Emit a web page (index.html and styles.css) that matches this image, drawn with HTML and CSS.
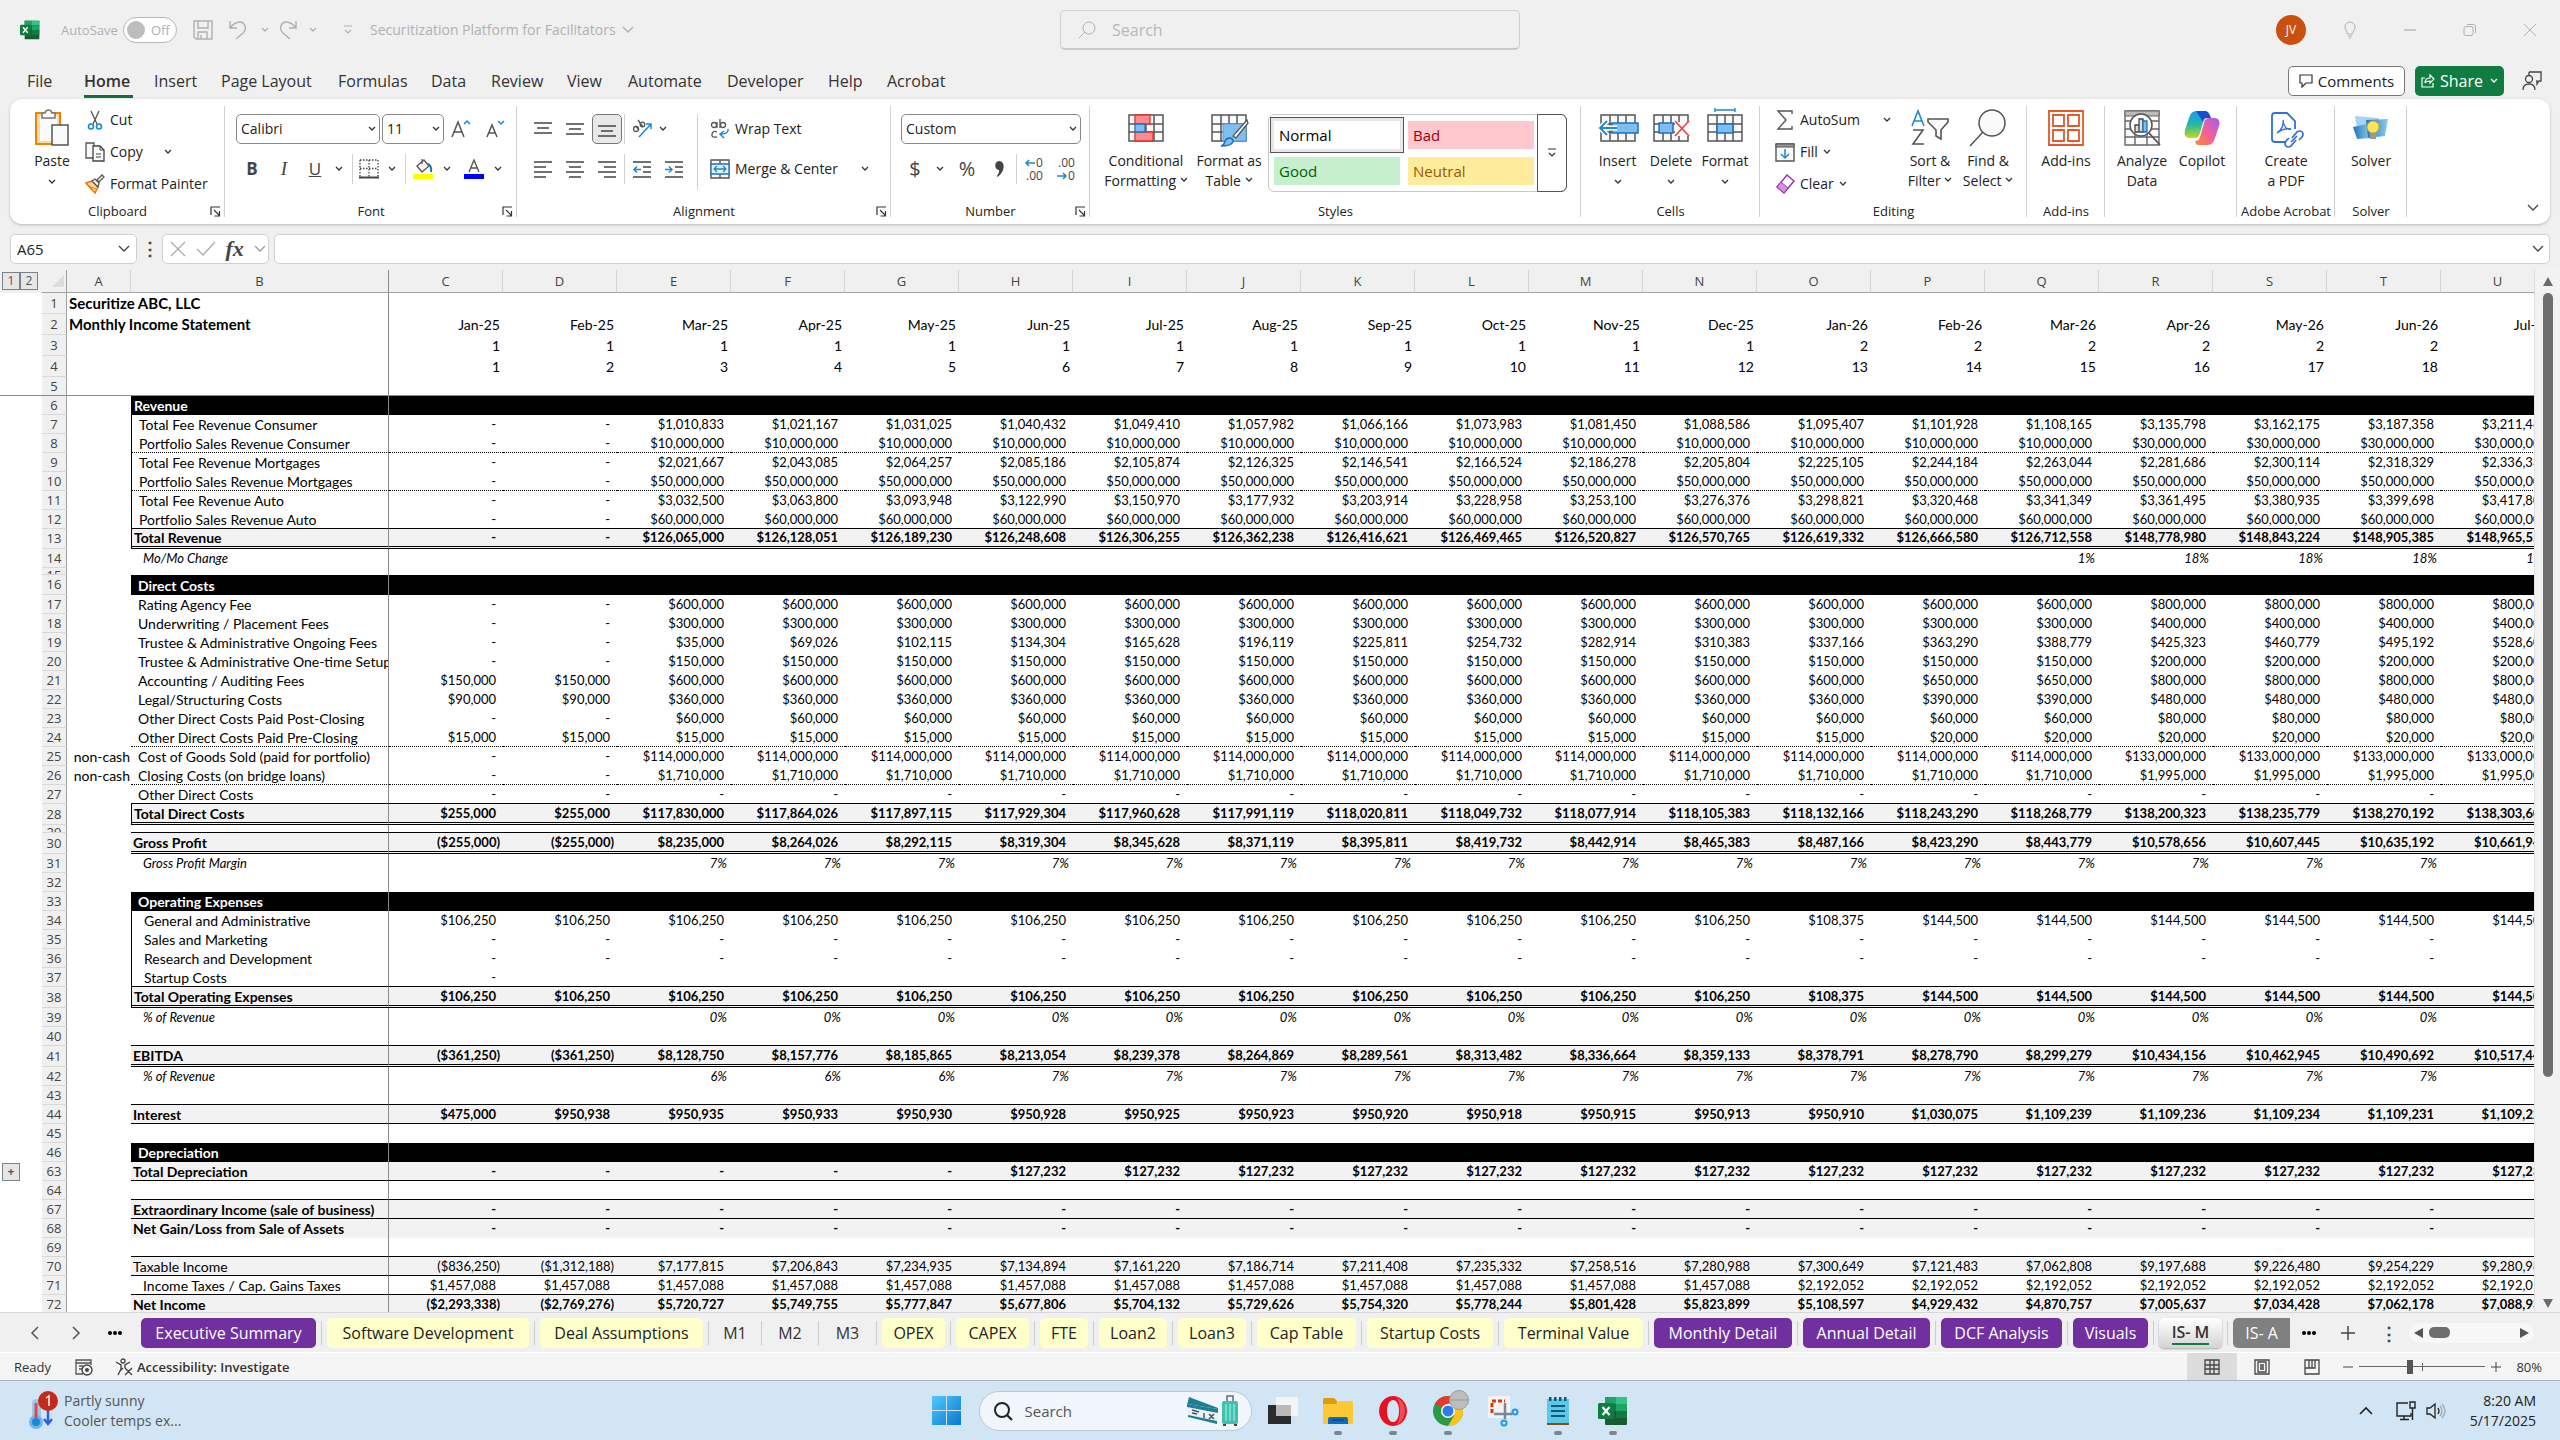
FILE: index.html
```html
<!DOCTYPE html>
<html lang="en">
<head>
<meta charset="utf-8">
<title>Securitization Platform for Facilitators</title>
<link rel="stylesheet" href="styles.css">
</head>
<body>
<svg class="defs" aria-hidden="true">
  <symbol id="chev" viewBox="0 0 8 6"><path d="M1 1l3 3 3-3" fill="none" stroke="currentColor" stroke-width="1.3"/></symbol>
  <symbol id="chev-l" viewBox="0 0 12 8"><path d="M1 1l5 5 5-5" fill="none" stroke="currentColor" stroke-width="1.3"/></symbol>
  <symbol id="launch" viewBox="0 0 11 11"><path d="M1 9V1h9M4 4l5 5M9.500 5v5H4.500" fill="none" stroke="#333" stroke-width="1.200"/></symbol>
  <symbol id="excel" viewBox="0 0 30 30"><path d="M8 1h20q1 0 1 1v26q0 1-1 1H8q-1 0-1-1V2q0-1 1-1z" fill="#185c37"/><path d="M7 1h11v7H7z" fill="#21a366"/><path d="M18 1h10q1 0 1 1v6H18z" fill="#33c481"/><path d="M18 8h11v7H18z" fill="#21a366"/><path d="M7 8h11v7H7zM18 15h11v7H18z" fill="#107c41"/><rect y="7" width="16" height="16" rx="1.500" fill="#107c41"/><path d="M4.500 11l7 8M11.500 11l-7 8" stroke="#fff" stroke-width="2.200"/></symbol>
  <symbol id="grid" viewBox="0 0 36 28"><path d="M1 1h34v26H1zM1 10h34M1 18h34M10 1v26M18 1v26M26 1v26" fill="#fafafa" stroke="#555" stroke-width="1.500"/></symbol>
</svg>

<header class="titlebar">
  <div class="quick">
    <svg class="s20" viewBox="0 0 30 30"><use href="#excel"/></svg>
    <span class="autosave">AutoSave</span>
    <button class="toggle" aria-label="AutoSave off"><i></i>Off</button>
    <button aria-label="Save"><svg class="s20" viewBox="0 0 20 20"><path d="M1 1h18v18H3l-2-2zM5 1v7h10V1M5 19v-7h9v7M8 19v-4" fill="none" stroke="currentColor" stroke-width="1.400"/></svg></button>
    <button aria-label="Undo"><svg class="s20" viewBox="0 0 20 20"><path d="M1 1v7h7M1 8C6 1 13 1 15 4s2 6-1 9l-7 6" fill="none" stroke="currentColor" stroke-width="1.400"/></svg></button>
    <svg class="chev"><use href="#chev"/></svg>
    <button aria-label="Redo"><svg class="s20" viewBox="0 0 20 20"><path d="M19 1v7h-7M19 8C14 1 7 1 5 4s-2 6 1 9l7 6" fill="none" stroke="currentColor" stroke-width="1.400"/></svg></button>
    <svg class="chev"><use href="#chev"/></svg>
    <svg class="s10" viewBox="0 0 10 10"><path d="M1 1h8M2 5l3 3 3-3" fill="none" stroke="currentColor" stroke-width="1.200"/></svg>
    <button class="doc">Securitization Platform for Facilitators <svg class="chev-l"><use href="#chev-l"/></svg></button>
  </div>
  <label class="search"><svg class="s18" viewBox="0 0 18 18"><circle cx="11" cy="7" r="6" fill="none" stroke="currentColor"/><path d="M7 11l-6 6" stroke="currentColor"/></svg><input type="text" placeholder="Search" aria-label="Search"></label>
  <div class="window">
    <button class="avatar">JV</button>
    <button aria-label="Tips"><svg class="s18" viewBox="0 0 18 18"><path d="M6.500 13C6 10 4 9 4 6a5 5 0 0 1 10 0c0 3-2 4-2.500 7zM7 15h4M8 17h2" fill="none" stroke="currentColor"/></svg></button>
    <button aria-label="Minimize"><svg class="s14" viewBox="0 0 14 14"><path d="M1 7h12" stroke="currentColor" stroke-width="1.300"/></svg></button>
    <button aria-label="Restore"><svg class="s14" viewBox="0 0 14 14"><rect x="1" y="3.500" width="9" height="9" rx="2" fill="none" stroke="currentColor"/><path d="M4 1.500h6q2.500 0 2.500 2.500v6" fill="none" stroke="currentColor"/></svg></button>
    <button aria-label="Close"><svg class="s14" viewBox="0 0 14 14"><path d="M1 1l12 12M13 1L1 13" stroke="currentColor"/></svg></button>
  </div>
</header>

<nav class="menu">
  <div class="menu-tabs">
    <button>File</button><button class="active">Home</button><button>Insert</button><button>Page Layout</button><button>Formulas</button><button>Data</button><button>Review</button><button>View</button><button>Automate</button><button>Developer</button><button>Help</button><button>Acrobat</button>
  </div>
  <button class="comments"><svg class="s14" viewBox="0 0 14 14"><path d="M1 1h12v8H7l-4 4V9H1z" fill="none" stroke="#333" stroke-width="1.200"/></svg>Comments</button>
  <button class="share"><svg class="s14" viewBox="0 0 14 14"><path d="M4 4H1v9h11V9M4 9c0-3 2-5 5-5V1l4 4-4 4V7C7 7 5 7 4 9z" fill="none" stroke="#fff" stroke-width="1.200"/></svg>Share<svg class="chev"><use href="#chev"/></svg></button>
  <button class="person" aria-label="Feedback"><svg class="s20" viewBox="0 0 20 20"><path d="M7 1h12v9h-2l-2 3v-3h-1M7 1v3" fill="none" stroke="#444" stroke-width="1.300"/><circle cx="7" cy="8" r="3.500" fill="none" stroke="#444" stroke-width="1.300"/><path d="M1 19q0-6 6-6t6 6" fill="none" stroke="#444" stroke-width="1.300"/></svg></button>
</nav>

<section class="ribbon">
  <div class="group g-clip">
    <div class="body clip">
      <button class="big"><svg class="s38" viewBox="0 0 38 38"><path d="M3 4h24v31H3z" fill="#fbdc9a" stroke="#e8850c" stroke-width="2"/><path d="M7 7h17v25H7z" fill="#fafafa"/><path d="M9 9V4h3c1-4 6-4 7 0h3v5z" fill="#fafafa" stroke="#777" stroke-width="1.500"/><path d="M19 16h16v20H19z" fill="#fafafa" stroke="#555" stroke-width="1.500"/></svg><span>Paste</span><svg class="chev"><use href="#chev"/></svg></button>
      <div class="stack">
        <button><svg class="s20" viewBox="0 0 20 20"><path d="M6 1l6 13M14 1L8 14" stroke="#555" stroke-width="1.300"/><circle cx="6" cy="16.500" r="2.500" fill="none" stroke="#1e88d0" stroke-width="1.600"/><circle cx="14" cy="16.500" r="2.500" fill="none" stroke="#1e88d0" stroke-width="1.600"/></svg>Cut</button>
        <button><svg class="s20" viewBox="0 0 20 20"><path d="M8 16H1V1h8v3" fill="#fafafa" stroke="#555" stroke-width="1.300"/><path d="M8 4h7l4 4v11H8z" fill="#fafafa" stroke="#444" stroke-width="1.300"/><path d="M15 4v4h4M11 12h5M11 15h5" fill="none" stroke="#444"/></svg>Copy<svg class="chev far"><use href="#chev"/></svg></button>
        <button><svg class="s20" viewBox="0 0 20 20"><path d="M1 9l6-2 6 6-3 6z" fill="#fbdc9a" stroke="#e8730c" stroke-width="1.500"/><path d="M7 7l3-2 4 4-1 4zM12 6l5-5 2 2-5 5z" fill="#fafafa" stroke="#555" stroke-width="1.300"/><path d="M3 12l8 3" stroke="#e8730c"/></svg>Format Painter</button>
      </div>
    </div>
    <footer>Clipboard<svg class="launch"><use href="#launch"/></svg></footer>
  </div>

  <div class="group g-font">
    <div class="body two">
      <div class="row font1">
        <button class="combo">Calibri<svg class="chev"><use href="#chev"/></svg></button>
        <button class="combo">11<svg class="chev"><use href="#chev"/></svg></button>
        <button aria-label="Grow font"><svg class="s20" viewBox="0 0 20 20"><path d="M1 18L7 3l6 15M3.500 13h7" fill="none" stroke="#555" stroke-width="1.500"/><path d="M13 5l3-3 3 3" fill="none" stroke="#1e88d0" stroke-width="1.500"/></svg></button>
        <button aria-label="Shrink font"><svg class="s20" viewBox="0 0 20 20"><path d="M2 18L7 6l5 12M4 14h6" fill="none" stroke="#555" stroke-width="1.500"/><path d="M13 2l3 3 3-3" fill="none" stroke="#1e88d0" stroke-width="1.500"/></svg></button>
      </div>
      <div class="row font2">
        <button class="b">B</button><button class="i">I</button><button class="u">U</button><svg class="chev"><use href="#chev"/></svg><hr>
        <button aria-label="Borders"><svg class="s20" viewBox="0 0 20 20"><path d="M1 1h18v17M1 1v17M10 1v17M1 9.500h18" fill="none" stroke="#444" stroke-width="1.300" stroke-dasharray="1.500 1.500"/><path d="M0 18.500h20" stroke="#444" stroke-width="2"/></svg></button><svg class="chev"><use href="#chev"/></svg><hr>
        <button aria-label="Fill color"><svg class="s20" viewBox="0 0 20 20"><path d="M4 7l7-6 5 6-7 6z" fill="#fafafa" stroke="#555" stroke-width="1.300"/><path d="M9 5V0" stroke="#555" stroke-width="1.300"/><path d="M15 5q4 2 3 8" fill="none" stroke="#1e70c0" stroke-width="2"/><path d="M0 15h20v5H0z" fill="#ff0"/></svg></button><svg class="chev"><use href="#chev"/></svg>
        <button aria-label="Font color"><svg class="s20" viewBox="0 0 20 20"><path d="M5 13L10 1l5 12M7 9h6" fill="none" stroke="#555" stroke-width="1.400"/><path d="M0 15h20v5H0z" fill="#00f"/></svg></button><svg class="chev"><use href="#chev"/></svg>
      </div>
    </div>
    <footer>Font<svg class="launch"><use href="#launch"/></svg></footer>
  </div>

  <div class="group g-align">
    <div class="body alignbody">
      <div class="two">
        <div class="row align1">
          <button aria-label="Top align"><svg class="s18" viewBox="0 0 18 18"><path d="M0 3h18M3 8h12M0 13h18" stroke="#444" stroke-width="1.400"/></svg></button>
          <button aria-label="Middle align"><svg class="s18" viewBox="0 0 18 18"><path d="M0 4h18M3 9h12M0 14h18" stroke="#444" stroke-width="1.400"/></svg></button>
          <button class="pressed" aria-label="Bottom align"><svg class="s18" viewBox="0 0 18 18"><path d="M0 6h18M3 11h12M0 16h18" stroke="#444" stroke-width="1.400"/></svg></button>
          <hr>
          <button aria-label="Orientation"><svg class="s20" viewBox="0 0 20 20"><path d="M7 18L19 5M14 5h5v5" fill="none" stroke="#1e88d0" stroke-width="1.500"/><circle cx="4" cy="10" r="2.500" fill="none" stroke="#555" stroke-width="1.300"/><path d="M4 7l3 4M6 1l5 7" stroke="#555" stroke-width="1.300"/><circle cx="10.500" cy="5.500" r="2.300" fill="none" stroke="#555" stroke-width="1.300"/></svg></button>
          <svg class="chev"><use href="#chev"/></svg>
        </div>
        <div class="row align1">
          <button aria-label="Align left"><svg class="s18" viewBox="0 0 18 18"><path d="M0 2h18M0 7h12M0 12h18M0 17h12" stroke="#444" stroke-width="1.400"/></svg></button>
          <button aria-label="Center"><svg class="s18" viewBox="0 0 18 18"><path d="M0 2h18M3 7h12M0 12h18M3 17h12" stroke="#444" stroke-width="1.400"/></svg></button>
          <button aria-label="Align right"><svg class="s18" viewBox="0 0 18 18"><path d="M0 2h18M6 7h12M0 12h18M6 17h12" stroke="#444" stroke-width="1.400"/></svg></button>
          <hr>
          <button aria-label="Decrease indent"><svg class="s18" viewBox="0 0 18 18"><path d="M0 2h18M10 7h8M10 12h8M0 17h18" stroke="#444" stroke-width="1.400"/><path d="M8 9.500H1M4 6.500l-3 3 3 3" fill="none" stroke="#1e88d0" stroke-width="1.500"/></svg></button>
          <button aria-label="Increase indent"><svg class="s18" viewBox="0 0 18 18"><path d="M0 2h18M10 7h8M10 12h8M0 17h18" stroke="#444" stroke-width="1.400"/><path d="M0 9.500h7M4 6.500l3 3-3 3" fill="none" stroke="#1e88d0" stroke-width="1.500"/></svg></button>
        </div>
      </div>
      <hr class="tall">
      <div class="two">
        <button class="wide"><svg class="s20" viewBox="0 0 20 20"><circle cx="4" cy="6" r="2.500" fill="none" stroke="#555" stroke-width="1.300"/><path d="M7 3v6M10 0v9" stroke="#555" stroke-width="1.300"/><circle cx="13" cy="6" r="2.500" fill="none" stroke="#555" stroke-width="1.300"/><path d="M7 13q-4-2-5 2t5 3" fill="none" stroke="#555" stroke-width="1.300"/><path d="M18 10q1 5-7 5M14 12l-4 3 4 4" fill="none" stroke="#1e88d0" stroke-width="1.500"/></svg>Wrap Text</button>
        <button class="wide merge"><svg class="s20" viewBox="0 0 20 20"><path d="M1 1h18v18H1zM10 1v18" fill="#fafafa" stroke="#555" stroke-width="1.400"/><path d="M1 5h18v10H1z" fill="#e3f1fb" stroke="#1e70c0" stroke-width="1.300"/><path d="M4 10h12M7 7l-3 3 3 3M13 7l3 3-3 3" fill="none" stroke="#1e88d0" stroke-width="1.300"/></svg>Merge &amp; Center<svg class="chev"><use href="#chev"/></svg></button>
      </div>
    </div>
    <footer>Alignment<svg class="launch"><use href="#launch"/></svg></footer>
  </div>

  <div class="group g-num">
    <div class="body two">
      <button class="combo">Custom<svg class="chev"><use href="#chev"/></svg></button>
      <div class="row num2">
        <button class="sym">$</button><svg class="chev"><use href="#chev"/></svg><button class="sym">%</button>
        <button aria-label="Comma style"><svg class="s18" viewBox="0 0 18 18"><path d="M9 1c7 0 6 12-2 16-1-1 3-4 2-7-5 0-5-9 0-9z" fill="#444"/></svg></button><hr>
        <button class="dec"><span><svg class="arr" viewBox="0 0 10 8"><path d="M10 4H1M4 1L1 4l3 3" fill="none" stroke="#1e88d0" stroke-width="1.500"/></svg>0</span><span>.00</span></button><button class="dec"><span>.00</span><span><svg class="arr" viewBox="0 0 10 8"><path d="M0 4h9M6 1l3 3-3 3" fill="none" stroke="#1e88d0" stroke-width="1.500"/></svg>0</span></button>
      </div>
    </div>
    <footer>Number<svg class="launch"><use href="#launch"/></svg></footer>
  </div>

  <div class="group g-style">
    <div class="body styles">
      <button class="big"><svg class="i36" viewBox="0 0 36 28"><use href="#grid"/><path d="M7 1h15v9H7zM7 18h18v9H7z" fill="#ff8a8a" stroke="#d33" stroke-width="1.300"/><path d="M7 10h10v8H7z" fill="#80bdf0" stroke="#1e70c0" stroke-width="1.300"/></svg><span>Conditional<br>Formatting <svg class="chev"><use href="#chev"/></svg></span></button>
      <button class="big"><svg class="i36" viewBox="0 0 36 28"><use href="#grid"/><path d="M12 10h23v17H12z" fill="#80bdf0" stroke="#5aa0e0"/><path d="M36 6L22 22l3 2L37 9z" fill="#fff" stroke="#555" stroke-width="1.300"/><path d="M10 32c5 0 2-7 8-8 6 0 7 8-8 8z" fill="#80bdf0" stroke="#1e70c0" stroke-width="1.500"/></svg><span>Format as<br>Table <svg class="chev"><use href="#chev"/></svg></span></button>
      <div class="gallery">
        <div class="tiles"><button class="normal">Normal</button><button class="bad">Bad</button><button class="good">Good</button><button class="neutral">Neutral</button></div>
        <button class="more" aria-label="More styles"><svg class="s10" viewBox="0 0 10 10"><path d="M1 1h8M2 5l3 3 3-3" fill="none" stroke="#333" stroke-width="1.200"/></svg></button>
      </div>
    </div>
    <footer>Styles</footer>
  </div>

  <div class="group g-cells">
    <div class="body cells">
      <button class="big"><svg class="i36" viewBox="0 0 36 28"><use href="#grid"/><path d="M12 9h26v10H12z" fill="#80bdf0" stroke="#1e70c0" stroke-width="1.500"/><path d="M17 14H0M7 7l-7 7 7 7" fill="none" stroke="#fff" stroke-width="5"/><path d="M17 14H0M7 7l-7 7 7 7" fill="none" stroke="#1e88d0" stroke-width="1.800"/></svg><span>Insert</span><svg class="chev"><use href="#chev"/></svg></button>
      <button class="big"><svg class="i36" viewBox="0 0 36 28"><use href="#grid"/><path d="M6 9h14v10H6z" fill="#80bdf0" stroke="#1e70c0" stroke-width="1.500"/><path d="M22 8h14v14H22z" fill="#fff"/><path d="M22 7l14 15M36 7L22 22" stroke="#e8484c" stroke-width="1.800"/></svg><span>Delete</span><svg class="chev"><use href="#chev"/></svg></button>
      <button class="big"><svg class="i36" viewBox="0 0 36 28"><use href="#grid"/><path d="M10 10h16v9H10z" fill="#80bdf0" stroke="#1e70c0" stroke-width="1.500"/><path d="M8-4h20M8-6v4M28-6v4" stroke="#1e88d0" stroke-width="1.400"/></svg><span>Format</span><svg class="chev"><use href="#chev"/></svg></button>
    </div>
    <footer>Cells</footer>
  </div>

  <div class="group g-edit">
    <div class="body edit">
      <div class="stack">
        <button><svg class="s20" viewBox="0 0 20 20"><path d="M17 4V1H3l8 9-8 9h14v-3" fill="none" stroke="#555" stroke-width="1.400"/></svg>AutoSum<svg class="chev far"><use href="#chev"/></svg></button>
        <button><svg class="s20" viewBox="0 0 20 20"><path d="M1 2h18v17H1z" fill="#fafafa" stroke="#555" stroke-width="1.400"/><path d="M1 2h18v3H1z" fill="#999" stroke="#555"/><path d="M10 7v9M6 12l4 4 4-4" fill="none" stroke="#1e88d0" stroke-width="1.500"/></svg>Fill <svg class="chev"><use href="#chev"/></svg></button>
        <button><svg class="s20" viewBox="0 0 20 20"><path d="M12 1l7 6-10 12-7-6z" fill="#fff" stroke="#9a35ad" stroke-width="1.500"/><path d="M6 8l7 6-4 5-7-6z" fill="#d690e4" stroke="#9a35ad"/></svg>Clear <svg class="chev"><use href="#chev"/></svg></button>
      </div>
      <button class="big"><svg class="s38" viewBox="0 0 38 38"><path d="M1 17L7 2l6 15M3 12h8" fill="none" stroke="#1e88d0" stroke-width="1.600"/><path d="M2 21h10L2 35h11" fill="none" stroke="#555" stroke-width="1.600"/><path d="M17 10h20v3l-7 8v9l-5-3v-6l-8-8z" fill="#fafafa" stroke="#555" stroke-width="1.600"/></svg><span>Sort &amp;<br>Filter <svg class="chev"><use href="#chev"/></svg></span></button>
      <button class="big"><svg class="s38" viewBox="0 0 38 38"><circle cx="23" cy="14" r="13" fill="#fafafa" stroke="#555" stroke-width="1.500"/><path d="M14 23L1 37" stroke="#555" stroke-width="1.500"/></svg><span>Find &amp;<br>Select <svg class="chev"><use href="#chev"/></svg></span></button>
    </div>
    <footer>Editing</footer>
  </div>

  <div class="group g-add">
    <div class="body"><button class="big"><svg class="s38" viewBox="0 0 38 38"><path d="M2 2h34v34H2zM6 6h11v11H6zM21 6h11v11H21zM6 21h11v11H6zM21 21h11v11H21z" fill="#fff" stroke="#e2592b" stroke-width="1.800"/></svg><span>Add-ins</span></button></div>
    <footer>Add-ins</footer>
  </div>

  <div class="group g-ana">
    <div class="body ana">
      <button class="big"><svg class="s38" viewBox="0 0 38 38"><path d="M2 2h34v34H2zM2 12h34M2 20h34M2 28h34M12 2v34M24 2v34" fill="#fafafa" stroke="#666" stroke-width="1.400"/><path d="M2 2h34v5H2z" fill="#bbb" stroke="#666"/><circle cx="18" cy="16" r="11" fill="#fff" stroke="#555" stroke-width="1.500"/><path d="M12 16h4v7h-4zM16 10h4v13h-4z" fill="#ddd" stroke="#444" stroke-width="1.300"/><path d="M20 12h4v11h-4z" fill="#80bdf0" stroke="#1e70c0" stroke-width="1.300"/><path d="M26 24l11 12" stroke="#555" stroke-width="1.800"/></svg><span>Analyze<br>Data</span></button>
      <button class="big"><svg class="s38" viewBox="0 0 38 38"><defs><linearGradient id="c1" x1="0" y1="0" x2="0" y2="1"><stop offset="0" stop-color="#1b9cf0"/><stop offset=".5" stop-color="#22b8a8"/><stop offset="1" stop-color="#c8d61c"/></linearGradient><linearGradient id="c2" x1="1" y1="0" x2="0" y2="1"><stop offset="0" stop-color="#a45cf0"/><stop offset=".5" stop-color="#f0609a"/><stop offset="1" stop-color="#ff8a30"/></linearGradient></defs><path d="M22 2h-9Q8 2 6 9L2 21q-2 8 5 8h5q4 0 5-5l4-14q1-4 5-4-1-4-4-4z" fill="url(#c1)"/><path d="M15 36h10q5 0 7-7l4-12q2-8-5-8h-5q-4 0-5 5l-4 14q-1 4-5 4 1 4 3 4z" fill="url(#c2)"/><path d="M13 2h9q4 0 6 7h-4q-3 0-4 4z" fill="#1650d0"/></svg><span>Copilot</span></button>
    </div>
    <footer></footer>
  </div>

  <div class="group g-acro">
    <div class="body"><button class="big"><svg class="s38" viewBox="0 0 38 38"><path d="M18 33H8q-3 0-3-3V7q0-3 3-3h12l8 8v8" fill="none" stroke="#2f6fde" stroke-width="1.800"/><path d="M10 24c4-2 7-8 6-13M16 11c0 6 4 10 8 9-5-1-10 1-14 4" fill="none" stroke="#2f6fde" stroke-width="1.400"/><path d="M25 29l5-6q3-2 5 0t0 5l-3 3M29 31l-5 6q-3 2-5 0t0-5l3-3M24 33l6-6" fill="none" stroke="#2f6fde" stroke-width="1.700"/></svg><span>Create<br>a PDF</span></button></div>
    <footer>Adobe Acrobat</footer>
  </div>

  <div class="group g-solv">
    <div class="body"><button class="big"><svg class="s38" viewBox="0 0 38 38"><defs><linearGradient id="sv"><stop offset="0" stop-color="#1f78b8"/><stop offset="1" stop-color="#8fcbf0"/></linearGradient></defs><path d="M3 7l24 2v14L6 26z" fill="#a9d4f0"/><path d="M1 18l14-3 4 14-14 1z" fill="url(#sv)"/><path d="M14 11l22-1-3 17-17 2z" fill="url(#sv)"/><circle cx="21" cy="18" r="6" fill="#ffe45c" stroke="#d8a820"/><path d="M18 24h6v6h-6z" fill="#999"/></svg><span>Solver</span></button></div>
    <footer>Solver</footer>
  </div>
  <button class="collapse" aria-label="Collapse ribbon"><svg class="chev-l"><use href="#chev-l"/></svg></button>
</section>

<section class="formula">
  <button class="namebox">A65<svg class="chev-l"><use href="#chev-l"/></svg></button>
  <span class="dots">⋮</span>
  <div class="fx">
    <button aria-label="Cancel"><svg class="s18" viewBox="0 0 18 18"><path d="M2 2l14 14M16 2L2 16" stroke="#aaa" stroke-width="1.300"/></svg></button>
    <button aria-label="Enter"><svg class="s18" viewBox="0 0 18 18"><path d="M0 9l6 6L18 2" fill="none" stroke="#aaa" stroke-width="1.300"/></svg></button>
    <button class="fxb">fx</button><svg class="chev-l pale"><use href="#chev-l"/></svg>
  </div>
  <div class="fxin"><input type="text" aria-label="Formula bar"><svg class="chev-l"><use href="#chev-l"/></svg></div>
</section>

<main class="sheet">
  <div class="pane"><table id="grid-table"></table></div>
  <div class="vscroll"><svg class="s10" viewBox="0 0 10 10"><path d="M5 0l5 9H0z" fill="#6b6b6b"/></svg><i></i><svg class="s10 end" viewBox="0 0 10 10"><path d="M5 10L0 1h10z" fill="#6b6b6b"/></svg></div>
</main>

<nav class="sheettabs">
  <div class="tabnav">
    <button aria-label="Previous sheet"><svg class="s14" viewBox="0 0 14 14"><path d="M10 1L4 7l6 6" fill="none" stroke="#555" stroke-width="1.500"/></svg></button>
    <button aria-label="Next sheet"><svg class="s14" viewBox="0 0 14 14"><path d="M4 1l6 6-6 6" fill="none" stroke="#555" stroke-width="1.500"/></svg></button>
    <button aria-label="More sheets"><svg class="s14" viewBox="0 0 14 14"><circle cx="2" cy="7" r="2"/><circle cx="7" cy="7" r="2"/><circle cx="12" cy="7" r="2"/></svg></button>
  </div>
  <div class="tabs">
    <button class="purple">Executive Summary</button><button class="yellow">Software Development</button><button class="yellow">Deal Assumptions</button><button>M1</button><button>M2</button><button>M3</button><button class="yellow">OPEX</button><button class="yellow">CAPEX</button><button class="yellow">FTE</button><button class="yellow">Loan2</button><button class="yellow">Loan3</button><button class="yellow">Cap Table</button><button class="yellow">Startup Costs</button><button class="yellow">Terminal Value</button><button class="purple">Monthly Detail</button><button class="purple">Annual Detail</button><button class="purple">DCF Analysis</button><button class="purple">Visuals</button><button class="current"><span>IS- M</span></button><button class="gray">IS- A</button>
  </div>
  <div class="tabend">
    <button aria-label="More"><svg class="s14" viewBox="0 0 14 14"><circle cx="2" cy="7" r="2"/><circle cx="7" cy="7" r="2"/><circle cx="12" cy="7" r="2"/></svg></button>
    <button aria-label="New sheet"><svg class="s14" viewBox="0 0 14 14"><path d="M0 7h14M7 0v14" stroke="#444" stroke-width="1.500"/></svg></button>
    <span class="dots">⋮</span>
    <div class="hscroll"><svg class="s10" viewBox="0 0 10 10"><path d="M0 5l9-5v10z" fill="#555"/></svg><i></i><svg class="s10 end" viewBox="0 0 10 10"><path d="M10 5L1 0v10z" fill="#555"/></svg></div>
  </div>
</nav>

<footer class="status">
  <span class="ready">Ready</span>
  <svg class="s18" viewBox="0 0 18 18"><path d="M8 16H1V2h15v5M1 5h15M4 8h4M4 11h3" fill="none" stroke="#555" stroke-width="1.300"/><circle cx="12" cy="12" r="5" fill="none" stroke="#444" stroke-width="1.400"/><circle cx="12" cy="12" r="2" fill="#444"/></svg>
  <svg class="s18 acc" viewBox="0 0 18 18"><circle cx="8" cy="3" r="2" fill="none" stroke="#444" stroke-width="1.300"/><path d="M1 4l5 3v4l-3 6M15 4l-5 3v3M6 12l2-2M10 10l7 7M17 10l-7 7" fill="none" stroke="#444" stroke-width="1.400"/></svg>
  <b>Accessibility: Investigate</b>
  <div class="views">
    <button class="on" aria-label="Normal view"><svg class="s16" viewBox="0 0 16 16"><path d="M1 1h14v14H1zM1 6h14M1 10h14M6 1v14M10 1v14" fill="none" stroke="#444" stroke-width="1.300"/></svg></button>
    <button aria-label="Page layout view"><svg class="s16" viewBox="0 0 16 16"><path d="M1 1h14v14H1zM4 3h8v10H4zM6 6h4M6 8h4M6 10h4" fill="none" stroke="#444" stroke-width="1.300"/></svg></button>
    <button aria-label="Page break view"><svg class="s16" viewBox="0 0 16 16"><path d="M1 1h14v14H1zM5 1v8h6V1M8 1v8M1 9h4" fill="none" stroke="#444" stroke-width="1.300"/></svg></button>
  </div>
  <button class="zb" aria-label="Zoom out"><svg class="s10" viewBox="0 0 10 10"><path d="M0 5h10" stroke="#444"/></svg></button>
  <input type="range" min="0" max="100" value="40" aria-label="Zoom">
  <button class="zb" aria-label="Zoom in"><svg class="s10" viewBox="0 0 10 10"><path d="M0 5h10M5 0v10" stroke="#444"/></svg></button>
  <span class="pct-label">80%</span>
</footer>

<footer class="taskbar">
  <button class="weather"><svg class="i30" viewBox="0 0 30 40"><rect x="6" y="8" width="9" height="24" rx="4.500" fill="#9dc8ea"/><circle cx="10" cy="31" r="7" fill="#6db4ee"/><path d="M10 12v18" stroke="#e0484a" stroke-width="3"/><circle cx="10" cy="31" r="4" fill="#1c86d8"/><path d="M22 18v14M18 28l4 5 4-5" fill="none" stroke="#2c62e0" stroke-width="2.500"/><circle cx="22" cy="10" r="10" fill="#c42b1c"/><path d="M20 7l3-2v10" fill="none" stroke="#fff" stroke-width="1.500"/></svg><span>Partly sunny<br>Cooler temps ex...</span></button>
  <div class="apps">
    <button aria-label="Start"><svg class="i30s" viewBox="0 0 30 30"><defs><linearGradient id="w" x2="1" y2="1"><stop offset="0" stop-color="#4fc9f8"/><stop offset="1" stop-color="#0a78d4"/></linearGradient></defs><path d="M0 0h14v14H0zM15 0h14v14H15zM0 15h14v14H0zM15 15h14v14H15z" fill="url(#w)"/></svg></button>
    <label class="tsearch"><svg class="s20" viewBox="0 0 20 20"><circle cx="9" cy="9" r="7" fill="none" stroke="#222" stroke-width="2"/><path d="M14 14l5 5" stroke="#222" stroke-width="2.200"/></svg><input type="text" placeholder="Search" aria-label="Search the taskbar"><svg class="i54" viewBox="0 0 54 32"><path d="M3 2l29 11-1 6L1 10z" fill="#1d7f93"/><path d="M1 9l31 5-1 15-29-7z" fill="#eceff0"/><path d="M1 9l31 5v4L1 12zM2 20l29 6v3L2 22z" fill="#1d7f93"/><path d="M6 15l7 2M6 18l5 1M18 18v5M23 19l5 5M28 19l-5 5" stroke="#456" stroke-width="1.500"/><path d="M41 7V1h6v6" fill="none" stroke="#667" stroke-width="1.500"/><rect x="36" y="6" width="16" height="23" rx="2" fill="#3fc0b0"/><path d="M40 9v17M44 9v17M48 9v17" stroke="#8be3d6" stroke-width="1.500"/><path d="M37 29h3v2h-3zM48 29h3v2h-3z" fill="#444"/></svg></label>
    <button aria-label="Task view"><svg class="i30s" viewBox="0 0 30 30"><path d="M0 9h23v19H0z" fill="#2b2b2b"/><path d="M8 1h22v19H8z" fill="#f4f4f4"/><path d="M8 9h15v11H8z" fill="#b9b9b9"/></svg></button>
    <button class="run" aria-label="Files"><svg class="i30s" viewBox="0 0 30 30"><path d="M0 4q0-2 2-2h9l3 3v6H0z" fill="#dc9c10"/><path d="M0 8h13l3-3h14v22q0 1-1 1H1q-1 0-1-1z" fill="#fcc935"/><path d="M5 28v-5q0-2 2-2h16q2 0 2 2v5z" fill="#0f6cbd"/><path d="M9 24h12" stroke="#0a4a8a" stroke-width="1.500"/></svg></button>
    <button class="run" aria-label="Opera"><svg class="i30s" viewBox="0 0 30 30"><path fill-rule="evenodd" d="M15 0a14 15 0 1 0 .1 0zM15 4c4 0 6 5 6 11s-2 11-6 11-6-5-6-11 2-11 6-11z" fill="#e81123"/><path d="M18 1a14 15 0 0 1 0 28q4-4 4-14T18 1z" fill="#f84b50"/></svg></button>
    <button class="run" aria-label="Chrome"><svg class="i30s" viewBox="0 6 30 30"><circle cx="15" cy="21" r="15" fill="#2b9a46"/><path d="M15 21L2 13.500A15 15 0 0 1 28 13.500H15z" fill="#e33b2e"/><path d="M15 36l6.500-11L15 13.500h13A15 15 0 0 1 15 36z" fill="#fcc31e"/><circle cx="15" cy="21" r="7" fill="#fff"/><circle cx="15" cy="21" r="5.500" fill="#2b7de9"/><circle cx="26" cy="10" r="9.500" fill="#bdbdbd" stroke="#999"/><path d="M17 10h18" stroke="#999"/></svg></button>
    <button aria-label="Snipping tool"><svg class="i30s" viewBox="0 0 30 30"><rect width="22" height="22" rx="2" fill="#f3f3f3"/><path d="M4 17V5h13" fill="none" stroke="#d83b01" stroke-width="3" stroke-dasharray="4 2"/><path d="M17 7v16M6 18h18" stroke="#7a8794" stroke-width="2.500"/><circle cx="27" cy="16" r="2.500" fill="none" stroke="#1e9be8" stroke-width="2"/><circle cx="16" cy="27" r="2.500" fill="none" stroke="#1e9be8" stroke-width="2"/></svg></button>
    <button class="run" aria-label="Notepad"><svg class="i30s" viewBox="0 0 30 30"><path d="M4 3h22v24H4z" fill="#5cc8e8"/><path d="M4 27h22v2H4z" fill="#8a4a10"/><path d="M8 10h14M8 15h14M8 20h14" stroke="#075a78" stroke-width="2"/><path d="M6 3h18" stroke="#0a5a80" stroke-width="4" stroke-dasharray="2.500 2.500"/></svg></button>
    <button class="run" aria-label="Excel"><svg class="i30s" viewBox="0 0 30 30"><use href="#excel"/></svg></button>
  </div>
  <div class="tray">
    <svg class="s14" viewBox="0 0 14 14"><path d="M1 10l6-6 6 6" fill="none" stroke="#222" stroke-width="1.600"/></svg>
    <svg class="s20" viewBox="0 0 20 20"><path d="M12 2H1v13h14v-3M8 15v3M4 18.500h9" fill="none" stroke="#222" stroke-width="1.400"/><path d="M14 1h5v6h-5zM16.500 7v12" fill="none" stroke="#222" stroke-width="1.400"/></svg>
    <svg class="s20" viewBox="0 0 20 20"><path d="M1 7h3l5-4v14l-5-4H1z" fill="none" stroke="#222" stroke-width="1.300"/><path d="M12 7q2 3 0 6" fill="none" stroke="#222" stroke-width="1.300"/><path d="M14 5q4 5 0 10M16 3q6 7 0 14" fill="none" stroke="#9aabb8" stroke-width="1.300"/></svg>
    <time>8:20 AM<br>5/17/2025</time>
  </div>
</footer>
<script src="sheet.js"></script>
</body>
</html>
```
FILE: styles.css
```css
* { box-sizing: border-box; }
body {
  margin: 0; height: 100vh; display: flex; flex-direction: column; overflow: hidden;
  background: #f0f0f0; color: #222;
  font: 15px/20px "Open Sans", "Noto Sans", sans-serif;
}
button, input { font: inherit; color: inherit; border: 0; background: none; padding: 0; margin: 0; outline: 0; }
button { display: flex; align-items: center; justify-content: center; white-space: nowrap; }
svg { display: block; flex: none; overflow: visible; }
hr { width: 1px; height: 30px; border: 0; margin: 0; background: #d0d0d0; }
.defs { position: absolute; width: 0; height: 0; }
.s10 { width: 10px; height: 10px; }
.s14 { width: 14px; height: 14px; }
.s16 { width: 16px; height: 16px; }
.s18 { width: 18px; height: 18px; }
.s20 { width: 20px; height: 20px; }
.s38 { width: 38px; height: 38px; }
.i36 { width: 36px; height: 28px; }
.i30 { width: 30px; height: 40px; }
.i30s { width: 30px; height: 30px; }
.i54 { width: 54px; height: 32px; }
.chev { width: 8px; height: 6px; color: #333; }
.chev-l { width: 12px; height: 8px; color: #444; }

/* title bar */
.titlebar { display: grid; grid-template-columns: 1060px 460px 1fr; height: 60px; color: #b0b0b0; align-items: center; flex: none; }
.titlebar .chev, .titlebar .chev-l { color: #b0b0b0; }
.quick { display: grid; grid-template-columns: 41px 62px 70px 36px 24px 24px 24px 24px 45px auto; padding-left: 20px; align-items: center; justify-content: start; font-size: 13px; }
.quick button { justify-content: flex-start; }
.quick .chev { justify-self: center; }
.quick .s10 { justify-self: center; }
.quick .toggle { width: 54px; height: 26px; border: 1px solid #b8b8b8; border-radius: 13px; background: #fff; padding-left: 3px; gap: 6px; }
.toggle i { width: 18px; height: 18px; border-radius: 50%; background: #bdbdbd; }
.doc { gap: 6px; font-size: 14px; }
.search { display: flex; align-items: center; gap: 16px; height: 40px; padding-left: 17px; border: 1px solid #d0d0d0; border-bottom: 2px solid #c8c8c8; border-radius: 5px; font-size: 16px; }
.search input::placeholder { color: #b8b8b8; opacity: 1; }
.window { display: flex; justify-content: flex-end; }
.window button { width: 60px; height: 30px; }
.window .avatar { width: 30px; margin: 0 14px; border-radius: 50%; background: #ca5010; color: #fff; font-size: 12px; }

/* menu */
.menu { display: flex; align-items: center; height: 39px; padding: 3px 16px 0 0; flex: none; }
.menu-tabs { flex: 1; display: grid; grid-template-columns: 57px 70px 67px 117px 93px 60px 76px 61px 99px 101px 59px auto; padding-left: 27px; justify-content: start; font-size: 16px; color: #333; }
.menu-tabs button { justify-content: flex-start; height: 34px; }
.menu-tabs .active { font-weight: 600; width: 49px; border-bottom: 3px solid #0f703b; padding-top: 3px; }
.comments, .share { height: 30px; border-radius: 5px; gap: 5px; font-size: 16px; }
.comments { width: 117px; border: 1px solid #777; background: #fff; font-size: 15px; }
.share { width: 89px; margin: 0 16px 0 10px; background: #107c41; color: #fff; }
.share .chev { color: #fff; margin-left: 2px; }
.person { width: 24px; }

/* ribbon */
.ribbon { display: flex; height: 125px; margin: 0 10px; padding-top: 5px; border-radius: 12px; background: #fff; box-shadow: 0 1px 3px #b8b8b8; flex: none; font-size: 14px; position: relative; z-index: 1; }
.group { height: 116px; position: relative; flex: none; }
.group::after { content: ""; position: absolute; right: 0; top: 2px; bottom: 3px; width: 1px; background: #d0d0d0; }
.group footer { height: 18px; line-height: 18px; text-align: center; font-size: 13px; white-space: nowrap; }
.body { height: 98px; }
.launch { width: 11px; height: 11px; position: absolute; right: 4px; bottom: 3px; }
.g-clip { width: 215px; }
.g-font { width: 292px; }
.g-align { width: 374px; }
.g-num { width: 199px; }
.g-style { width: 491px; }
.g-cells { width: 179px; }
.g-edit { width: 267px; }
.g-add { width: 78px; }
.g-ana { width: 132px; }
.g-acro { width: 98px; }
.g-solv { width: 72px; }
.big { flex-direction: column; justify-content: flex-start; padding-top: 5px; height: 96px; width: 100%; white-space: nowrap; line-height: 20px; gap: 4px; }
.big span svg { display: inline-block; vertical-align: 3px; }
.big .i36 { margin: 5px 0; }
.big > .chev { margin-top: 4px; }
.clip { display: grid; grid-template-columns: 50px 1fr; column-gap: 8px; padding-left: 17px; }
.stack button { height: 32px; gap: 5px; }
.far { margin-left: 16px; }
.two { display: grid; grid-template-rows: 30px 30px; row-gap: 10px; padding-top: 10px; align-content: start; }
.row { display: grid; align-items: center; justify-items: center; }
.combo { width: 100%; height: 30px; border: 1px solid #8a8a8a; border-radius: 5px; justify-content: space-between; padding: 0 3px 0 4px; }
.g-font .body { padding-left: 11px; }
.font1 { grid-template-columns: 144px 62px 30px 34px; column-gap: 2px; justify-content: start; }
.font2 { grid-template-columns: 32px 32px 30px 18px 8px 26px 20px 6px 30px 18px 36px 12px; justify-content: start; color: #444; font-size: 17px; }
.b { font-weight: 700; }
.i { font-style: italic; font-family: "Liberation Serif", serif; font-size: 19px; }
.u { text-decoration: underline; }
.alignbody { display: grid; grid-template-columns: 180px 1px auto; justify-content: start; }
.align1 { grid-template-columns: 32px 32px 32px 2px 34px 30px; padding-left: 10px; justify-content: start; }
.align1 button { width: 30px; height: 30px; }
.align1 .chev { justify-self: start; }
.pressed { border: 1px solid #777; border-radius: 5px; background: #e8e8e8; }
.tall { height: 76px; margin-top: 10px; }
.wide { gap: 5px; margin-left: 12px; justify-content: flex-start; }
.merge .chev { margin-left: 18px; }
.g-num .body { padding: 10px 10px 0; }
.num2 { grid-template-columns: 28px 22px 32px 32px 2px 34px 30px; justify-content: start; color: #444; }
.sym { font-size: 20px; }
.dec { flex-direction: column; align-items: flex-end; font-size: 12px; line-height: 13px; }
.dec span { display: flex; align-items: center; gap: 1px; }
.arr { width: 10px; height: 8px; }
.styles { display: grid; grid-template-columns: 88px 78px 299px; padding-left: 12px; }
.gallery { display: flex; height: 78px; margin-top: 10px; border: 1px solid #c8c8c8; border-radius: 6px; }
.tiles { flex: 1; display: grid; grid-template-columns: 126px 126px; grid-template-rows: 28px 28px; gap: 8px 8px; padding: 6px 0 0 5px; font-size: 15px; }
.tiles button { justify-content: flex-start; padding-left: 5px; }
.normal { color: #000; outline: 1px solid #555; outline-offset: 3px; box-shadow: 0 0 0 3px #e8e8e8; }
.bad { background: #ffc7ce; color: #9c0006; }
.good { background: #c6efce; color: #006100; }
.neutral { background: #ffeb9c; color: #9c5700; }
.more { width: 30px; margin: -1px; border: 1px solid #555; border-radius: 0 6px 6px 0; }
.cells { display: grid; grid-template-columns: 53px 54px 54px; padding-left: 10px; }
.edit { display: grid; grid-template-columns: 127px 56px 60px; padding-left: 15px; }
.edit .far { margin-left: 18px; }
.ana { display: grid; grid-template-columns: 74px 46px; }
.collapse { margin: 94px 11px 0 auto; height: 20px; }

/* formula bar */
.formula { display: flex; height: 46px; padding: 10px 10px 6px; flex: none; font-size: 16px; }
.namebox, .fx, .fxin { background: #fff; border: 1px solid #d0d0d0; border-radius: 5px; display: flex; align-items: center; justify-content: space-between; }
.namebox { width: 127px; padding: 0 6px; font-size: 15px; }
.dots { width: 25px; text-align: center; line-height: 28px; font-weight: 700; font-size: 18px; color: #444; }
.fx { width: 107px; padding: 0 2px 0 6px; }
.fxb { font: italic 700 22px/22px "Liberation Serif", serif; color: #444; }
.fxin { flex: 1; margin-left: 5px; padding-right: 5px; }
.fxin input { flex: 1; }
.pale { color: #999; }

/* worksheet */
.sheet { flex: 1; min-height: 0; display: flex; background: #fff; border-bottom: 1px solid #d8d8d8; }
.pane { flex: 1; min-width: 0; overflow: hidden; }
table { table-layout: fixed; border-spacing: 0; font: 13px/15px Lato, "Open Sans", sans-serif; color: #000; }
td, th { padding: 0; font-weight: 400; white-space: nowrap; vertical-align: middle; }
.c-out { width: 42px; }
.c-row { width: 25px; }
.c-a { width: 64px; }
.c-b { width: 258px; }
.c-n { width: 114px; }
thead th { height: 23px; background: #f0f0f0; color: #444; font: 13px/20px "Open Sans", sans-serif; border-bottom: 1px solid #a0a0a0; border-right: 1px solid #d4d4d4; }
thead .c-out { border-color: #f0f0f0; background: #f0f0f0; padding-left: 2px; }
thead .c-row { border-right-color: #a0a0a0; }
thead .c-b, .lab { border-right: 1px solid #8c8c8c; }
.levels { display: flex; }
.levels button, .plus { width: 18px; height: 18px; border: 1px solid #7a828c; background: #e6e6e6; color: #555; font: 12px/14px "Open Sans", sans-serif; }
.plus { margin-left: 2px; font-weight: 700; }
.corner { width: 0; margin-left: 10px; border-left: 12px solid transparent; border-bottom: 12px solid #dcdcdc; }
.rh { background: #f0f0f0; border-right: 1px solid #a0a0a0; border-bottom: 1px solid #d8d8d8; color: #444; font: 13px/15px "Open Sans", sans-serif; }
.rh .thin { overflow: hidden; }
.a { text-align: right; padding-right: 1px; font-size: 14px; }
.lab { text-align: left; padding-left: 2px; font-size: 14px; overflow: hidden; }
.in1 { padding-left: 7px; }
.in2 { padding-left: 12px; }
.n { text-align: right; padding-right: 7px; }
.n.par { padding-right: 3px; }
.top { font-size: 14px; }
.top .n { padding-right: 3px; }
.top .lab { font-weight: 700; font-size: 15px; }
.freeze > * { border-bottom: 1px solid #8c8c8c; }
.black .lab, .black .n { background: #000; color: #fff; font-weight: 700; }
.total .lab, .total .n { font-weight: 700; }
.fill .lab, .fill .n { background: #f2f2f2; }
.pct td { font-style: italic; font-size: 13px; }
.pct .n { padding-right: 4px; }
.dot .lab, .dot .n { border-bottom: 1px dotted #000; }
.line .lab, .line .n { border-bottom: 1px solid #000; }
.dbl .lab, .dbl .n { border-bottom: 3px double #000; }
.edge .lab { border-left: 1px solid #000; }
.vscroll { width: 26px; background: #f2f2f2; border-left: 1px solid #e0e0e0; display: flex; flex-direction: column; align-items: center; padding: 7px 0 4px; }
.vscroll i { flex: 0 0 76%; margin-top: 6px; width: 10px; border-radius: 5px; background: #6e6e6e; }
.end { margin-top: auto; }

/* sheet tabs */
.sheettabs { display: flex; height: 40px; align-items: center; border-bottom: 1px solid #fff; flex: none; color: #333; }
.tabnav { display: grid; grid-template-columns: 40px 42px 36px; justify-items: center; padding-left: 15px; width: 141px; flex: none; }
.tabs { display: grid; grid-template-columns: 175px 202px 163px 42px 46px 47px 63px 73px 48px 68px 68px 99px 126px 139px 138px 127px 121px 75px 63px 57px; column-gap: 11px; font-size: 16px; flex: none; }
.tabs button { height: 30px; border-radius: 5px; position: relative; }
.tabs button:not(:last-child)::after { content: ""; position: absolute; right: -6px; top: 3px; width: 1px; height: 24px; background: #ccc; }
.purple { background: #7030a0; color: #fff; }
.yellow { background: #ffffcc; color: #222; }
.tabs .gray { background: #808080; color: #fff; border-radius: 5px 0 0 5px; }
.tabs .current { background: linear-gradient(#fff, #d4d4d4); box-shadow: 0 1px 2px #aaa; font-weight: 600; }
.current span { border-bottom: 2px solid #107c41; line-height: 22px; }
.tabend { display: grid; grid-template-columns: 37px 42px 40px 125px; align-items: center; flex: none; }
.tabend .dots { width: 40px; }
.hscroll { height: 20px; padding: 0 5px; border-radius: 10px; background: #f7f7f7; display: flex; align-items: center; gap: 5px; }
.hscroll i { width: 21px; height: 11px; border-radius: 5px; background: #6e6e6e; }
.hscroll .end { margin: 0 0 0 auto; }

/* status bar */
.status { display: flex; align-items: center; height: 27px; padding: 0 18px 0 14px; background: #f5f5f5; font-size: 13px; flex: none; color: #333; }
.status b { font-weight: 600; }
.ready { width: 61px; }
.acc { margin: 0 4px 0 22px; }
.views { display: flex; margin-left: auto; height: 27px; }
.views button { width: 50px; }
.views .on { background: #dcdcdc; }
.zb { width: 22px; }
.status input { width: 126px; height: 20px; appearance: none; background: linear-gradient(#666, #666) 50% 50% / 1px 8px no-repeat, linear-gradient(#666, #666) 0 50% / 100% 1px no-repeat; }
.status input::-webkit-slider-thumb { appearance: none; width: 6px; height: 14px; background: #555; }
.pct-label { width: 35px; text-align: right; white-space: nowrap; }

/* taskbar */
.taskbar { display: grid; grid-template-columns: 1fr auto 1fr; align-items: center; height: 60px; background: #d2e5f4; border-top: 1px solid #a9b6c2; flex: none; padding: 0 24px 0 26px; }
.weather { justify-self: start; gap: 8px; text-align: left; font-size: 14px; color: #555; }
.apps { display: grid; grid-template-columns: 47px 289px repeat(7, 55px); align-items: center; padding-left: 22px; }
.apps button { justify-content: flex-start; height: 59px; position: relative; }
.run::after { content: ""; position: absolute; left: 11px; bottom: 5px; width: 8px; height: 4px; border-radius: 2px; background: #7c868e; }
.tsearch { width: 273px; height: 40px; border-radius: 20px; background: #f1f6fc; border: 1px solid #b8cad8; display: flex; align-items: center; padding: 0 11px 0 13px; gap: 12px; font-size: 15px; color: #555; }
.tsearch input { flex: 1; width: 0; }
.tsearch input::placeholder { color: #555; opacity: 1; }
.tray { display: flex; align-items: center; justify-content: flex-end; gap: 10px; font-size: 14px; }
.tray .s14 { margin-right: 13px; }
.tray time { width: 80px; text-align: right; }
```
FILE: sheet.js
```js
// Row: [number, height, classes, column A, label, indent, values]
// In values, "x*3" repeats x three times and "_" is an empty cell.
const rows = [
  [1, 21, 'top', '', 'Securitize ABC, LLC', 0, ''],
  [2, 21, 'top', '', 'Monthly Income Statement', 0, 'Jan-25 Feb-25 Mar-25 Apr-25 May-25 Jun-25 Jul-25 Aug-25 Sep-25 Oct-25 Nov-25 Dec-25 Jan-26 Feb-26 Mar-26 Apr-26 May-26 Jun-26 Jul-26'],
  [3, 21, 'top', '', '', 0, '1*12 2*7'],
  [4, 21, 'top', '', '', 0, '1 2 3 4 5 6 7 8 9 10 11 12 13 14 15 16 17 18 19'],
  [5, 19, 'freeze', '', '', 0, ''],
  [6, 19, 'black edge', '', 'Revenue', 0, ''],
  [7, 19, 'edge', '', 'Total Fee Revenue Consumer', 1, '-*2 1,010,833 1,021,167 1,031,025 1,040,432 1,049,410 1,057,982 1,066,166 1,073,983 1,081,450 1,088,586 1,095,407 1,101,928 1,108,165 3,135,798 3,162,175 3,187,358 3,211,460'],
  [8, 19, 'edge dot', '', 'Portfolio Sales Revenue Consumer', 1, '-*2 10,000,000*13 30,000,000*4'],
  [9, 19, 'edge', '', 'Total Fee Revenue Mortgages', 1, '-*2 2,021,667 2,043,085 2,064,257 2,085,186 2,105,874 2,126,325 2,146,541 2,166,524 2,186,278 2,205,804 2,225,105 2,244,184 2,263,044 2,281,686 2,300,114 2,318,329 2,336,334'],
  [10, 19, 'edge dot', '', 'Portfolio Sales Revenue Mortgages', 1, '-*2 50,000,000*17'],
  [11, 19, 'edge', '', 'Total Fee Revenue Auto', 1, '-*2 3,032,500 3,063,800 3,093,948 3,122,990 3,150,970 3,177,932 3,203,914 3,228,958 3,253,100 3,276,376 3,298,821 3,320,468 3,341,349 3,361,495 3,380,935 3,399,698 3,417,806'],
  [12, 19, 'edge line', '', 'Portfolio Sales Revenue Auto', 1, '-*2 60,000,000*17'],
  [13, 20, 'edge total fill dbl', '', 'Total Revenue', 0, '-*2 126,065,000 126,128,051 126,189,230 126,248,608 126,306,255 126,362,238 126,416,621 126,469,465 126,520,827 126,570,765 126,619,332 126,666,580 126,712,558 148,778,980 148,843,224 148,905,385 148,965,550'],
  [14, 19, 'pct', '', 'Mo/Mo Change', 2, '_*14 1% 18%*4'],
  [15, 7, '', '', '', 0, ''],
  [16, 20, 'black', '', 'Direct Costs', 1, ''],
  [17, 19, '', '', 'Rating Agency Fee', 1, '-*2 600,000*13 800,000*4'],
  [18, 19, '', '', 'Underwriting / Placement Fees', 1, '-*2 300,000*13 400,000*4'],
  [19, 19, '', '', 'Trustee & Administrative Ongoing Fees', 1, '-*2 35,000 69,026 102,115 134,304 165,628 196,119 225,811 254,732 282,914 310,383 337,166 363,290 388,779 425,323 460,779 495,192 528,608'],
  [20, 19, '', '', 'Trustee & Administrative One-time Setup', 1, '-*2 150,000*13 200,000*4'],
  [21, 19, '', '', 'Accounting / Auditing Fees', 1, '150,000*2 600,000*11 650,000*2 800,000*4'],
  [22, 19, '', '', 'Legal/Structuring Costs', 1, '90,000*2 360,000*11 390,000*2 480,000*4'],
  [23, 19, '', '', 'Other Direct Costs Paid Post-Closing', 1, '-*2 60,000*13 80,000*4'],
  [24, 19, 'dot', '', 'Other Direct Costs Paid Pre-Closing', 1, '15,000*13 20,000*6'],
  [25, 19, '', 'non-cash', 'Cost of Goods Sold (paid for portfolio)', 1, '-*2 114,000,000*13 133,000,000*4'],
  [26, 19, 'dot', 'non-cash', 'Closing Costs (on bridge loans)', 1, '-*2 1,710,000*13 1,995,000*4'],
  [27, 19, 'line', '', 'Other Direct Costs', 1, '-*19'],
  [28, 21, 'edge total fill dbl', '', 'Total Direct Costs', 0, '255,000*2 117,830,000 117,864,026 117,897,115 117,929,304 117,960,628 117,991,119 118,020,811 118,049,732 118,077,914 118,105,383 118,132,166 118,243,290 118,268,779 138,200,323 138,235,779 138,270,192 138,303,608'],
  [29, 8, 'line', '', '', 0, ''],
  [30, 21, 'total fill dbl', '', 'Gross Profit', 0, '(255,000)*2 8,235,000 8,264,026 8,292,115 8,319,304 8,345,628 8,371,119 8,395,811 8,419,732 8,442,914 8,465,383 8,487,166 8,423,290 8,443,779 10,578,656 10,607,445 10,635,192 10,661,942'],
  [31, 19, 'pct', '', 'Gross Profit Margin', 2, '_*2 7%*17'],
  [32, 19, '', '', '', 0, ''],
  [33, 19, 'black', '', 'Operating Expenses', 1, ''],
  [34, 19, 'edge', '', 'General and Administrative', 2, '106,250*12 108,375 144,500*6'],
  [35, 19, 'edge', '', 'Sales and Marketing', 2, '-*19'],
  [36, 19, 'edge', '', 'Research and Development', 2, '-*19'],
  [37, 19, 'edge line', '', 'Startup Costs', 2, '-'],
  [38, 21, 'edge total fill dbl', '', 'Total Operating Expenses', 0, '106,250*12 108,375 144,500*6'],
  [39, 19, 'pct', '', '% of Revenue', 2, '_*2 0%*17'],
  [40, 19, 'line', '', '', 0, ''],
  [41, 21, 'total fill dbl', '', 'EBITDA', 0, '(361,250)*2 8,128,750 8,157,776 8,185,865 8,213,054 8,239,378 8,264,869 8,289,561 8,313,482 8,336,664 8,359,133 8,378,791 8,278,790 8,299,279 10,434,156 10,462,945 10,490,692 10,517,442'],
  [42, 19, 'pct', '', '% of Revenue', 2, '_*2 6%*3 7%*14'],
  [43, 19, 'line', '', '', 0, ''],
  [44, 19, 'total fill line', '', 'Interest', 0, '475,000 950,938 950,935 950,933 950,930 950,928 950,925 950,923 950,920 950,918 950,915 950,913 950,910 1,030,075 1,109,239 1,109,236 1,109,234 1,109,231 1,109,229'],
  [45, 19, '', '', '', 0, ''],
  [46, 19, 'black', '', 'Depreciation', 1, ''],
  [63, 19, 'total fill line', '', 'Total Depreciation', 0, '-*5 127,232*14'],
  [64, 19, 'line', '', '', 0, ''],
  [67, 19, 'total fill line', '', 'Extraordinary Income (sale of business)', 0, '-*19'],
  [68, 19, 'total fill', '', 'Net Gain/Loss from Sale of Assets', 0, '-*19'],
  [69, 19, 'line', '', '', 0, ''],
  [70, 19, 'fill line', '', 'Taxable Income', 0, '(836,250) (1,312,188) 7,177,815 7,206,843 7,234,935 7,134,894 7,161,220 7,186,714 7,211,408 7,235,332 7,258,516 7,280,988 7,300,649 7,121,483 7,062,808 9,197,688 9,226,480 9,254,229 9,280,982'],
  [71, 19, 'line', '', 'Income Taxes / Cap. Gains Taxes', 2, '1,457,088*12 2,192,052*7'],
  [72, 19, 'total fill', '', 'Net Income', 0, '(2,293,338) (2,769,276) 5,720,727 5,749,755 5,777,847 5,677,806 5,704,132 5,729,626 5,754,320 5,778,244 5,801,428 5,823,899 5,108,597 4,929,432 4,870,757 7,005,637 7,034,428 7,062,178 7,088,930'],
];

const letters = 'CDEFGHIJKLMNOPQRSTU'.split('');
const esc = s => s.replace(/&/g, '&amp;');

function expand(text) {
  const out = [];
  text.split(' ').forEach(token => {
    const [value, times] = token.split('*');
    for (let i = 0; i < (times || 1); i++) out.push(value === '_' ? '' : value);
  });
  return out;
}

function cell(value) {
  const money = /,/.test(value);
  const par = value.startsWith('(');
  const shown = par ? '($' + value.slice(1) : money ? '$' + value : value;
  return `<td class="n${par ? ' par' : ''}">${shown}</td>`;
}

let html = '<colgroup><col class="c-out"><col class="c-row"><col class="c-a"><col class="c-b">' +
  '<col class="c-n">'.repeat(19) + '</colgroup><thead><tr><th class="c-out"><div class="levels"><button>1</button><button>2</button></div></th>' +
  '<th class="c-row"><div class="corner"></div></th><th>A</th><th class="c-b">B</th>' +
  letters.map(l => `<th>${l}</th>`).join('') + '</tr></thead><tbody>';

rows.forEach(([num, height, cls, a, label, indent, values]) => {
  const cells = expand(values);
  const small = height < 10;
  html += `<tr class="${cls}" style="height:${height}px"><td>${num === 63 ? '<button class="plus">+</button>' : ''}</td>` +
    `<th class="rh" scope="row"><div${small ? ` class="thin" style="height:${height - 1}px"` : ''}>${num}</div></th>`;
  html += num < 3
    ? `<td class="lab" colspan="2">${label}</td>`
    : `<td class="a">${a}</td><td class="lab${indent ? ' in' + indent : ''}">${esc(label)}</td>`;
  html += letters.map((l, i) => cell(cells[i] || '')).join('') + '</tr>';
});
const table = document.getElementById('grid-table');
table.innerHTML = html + '</tbody>';
table.style.width = 42 + 25 + 64 + 258 + 114 * letters.length + 'px';
```
